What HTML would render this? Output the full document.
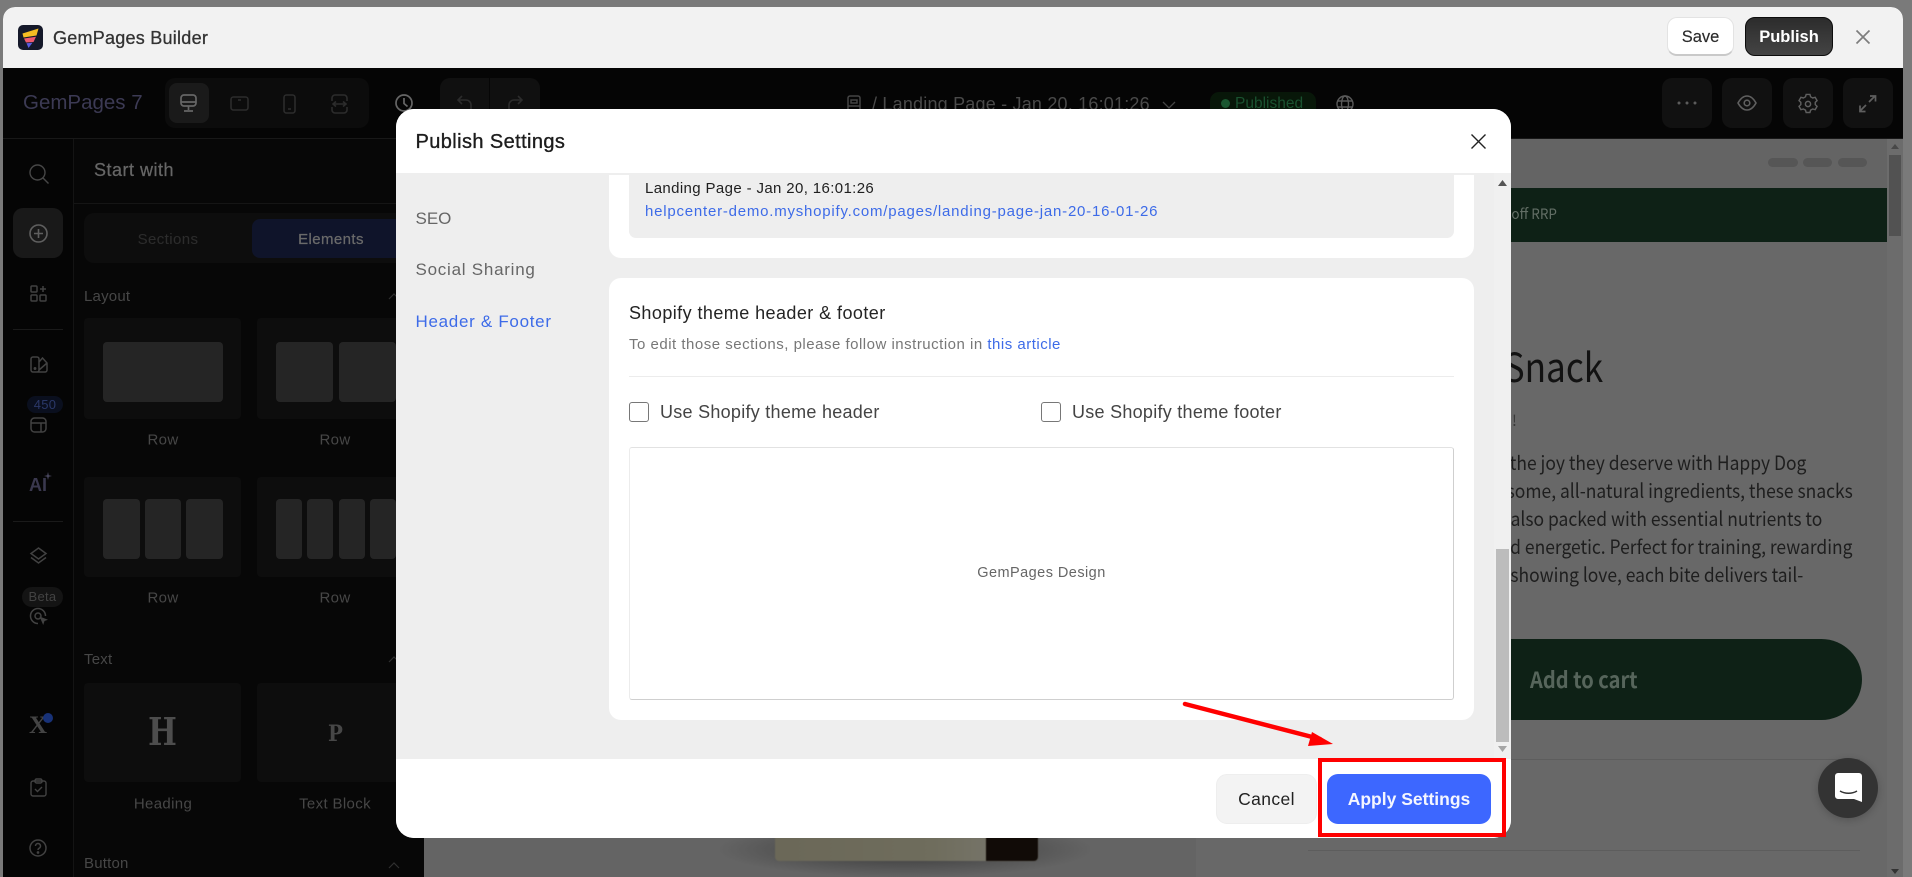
<!DOCTYPE html>
<html lang="en"><head><meta charset="utf-8"><title>GemPages Builder</title>
<style>
*{box-sizing:border-box}
html,body{margin:0;padding:0;width:1912px;height:877px;overflow:hidden;background:#7a7a7a;font-family:"Liberation Sans",sans-serif}
.a{position:absolute}
.t{position:absolute;white-space:nowrap;line-height:1}
svg{position:absolute;overflow:visible;fill:none}
.card{position:absolute;background:#0d0d0d;border-radius:4px}
.in{position:absolute;background:#252525;border-radius:4px}
.lb{position:absolute;white-space:nowrap;font-size:15px;line-height:1;color:#474747;transform:translate(-50%,-50%);letter-spacing:.35px}
.tb{position:absolute;top:78px;width:50px;height:50px;background:#111;border-radius:10px}
.src{font-family:"Noto Sans CJK SC",sans-serif}
.bt{font-size:19.500px;line-height:28px;color:#1e1e1e;transform:scaleX(.895);transform-origin:right center}
</style></head><body>
<!-- window -->
<div class="a" style="left:3px;top:7px;width:1900px;height:870px;background:#050505;border-radius:12px 12px 0 0;overflow:hidden">
</div>
<div class="a" style="left:3px;top:7px;width:1900px;height:61px;background:#f2f2f2;border-radius:12px 12px 0 0"></div>
<!-- title bar -->
<div class="a" style="left:18px;top:25px;width:25px;height:25px;border-radius:5px;background:#15192a"></div>
<svg style="left:18px;top:25px" width="25" height="25" viewBox="0 0 25 25">
<path d="M4.500 8.500 L20.500 3.500 L18.500 10.500 L5.500 12.500Z" fill="#f5bd22"/><path d="M6 13.500 L18 11.800 L15.500 17 L8 17.500Z" fill="#ee5a6f"/><path d="M8.500 18.300 L14.500 17.800 L10.500 23Z" fill="#5a5ce0"/>
</svg>
<div class="t" style="left:53px;top:28px;font-size:18px;line-height:20px;color:#333;letter-spacing:.25px;-webkit-text-stroke:.3px #333">GemPages Builder</div>
<div class="a" style="left:1667px;top:17px;width:67px;height:39px;background:#fff;border:1px solid #e3e3e3;border-bottom:2px solid #c9c9c9;border-radius:10px"></div>
<div class="t" style="left:1667px;top:27px;width:67px;text-align:center;font-size:16.500px;line-height:20px;color:#2a2a2a;-webkit-text-stroke:.15px #2a2a2a">Save</div>
<div class="a" style="left:1745px;top:17px;width:88px;height:39px;background:linear-gradient(#2c2c2c,#444);border:1.500px solid #0c0c0c;border-radius:10px"></div>
<div class="t" style="left:1745px;top:27px;width:88px;text-align:center;font-size:16.500px;font-weight:700;line-height:20px;color:#fff">Publish</div>
<svg style="left:1856px;top:30px" width="14" height="14"><path d="M.5.5 13.500 13.500M13.500.5.5 13.500" stroke="#7d7d7d" stroke-width="1.700"/></svg>

<!-- top bar -->
<div class="a" style="left:3px;top:138px;width:1900px;height:1px;background:#181818"></div>
<div class="t" style="left:23px;top:92px;font-size:20.500px;line-height:22px;color:#3c3a54">GemPages 7</div>
<div class="a" style="left:165px;top:78px;width:204px;height:50px;background:#0c0c0c;border-radius:10px"></div>
<div class="a" style="left:169px;top:83px;width:40px;height:40px;background:#1a1a1a;border-radius:8px"></div>
<svg style="left:180px;top:94px" width="18" height="20" stroke="#666" stroke-width="1.700"><rect x="1" y="1" width="15" height="11" rx="3"/><path d="M1 8h15M8.500 12v4M4 17h9"/></svg>
<svg style="left:230px;top:96px" width="20" height="16" stroke="#2c2c2c" stroke-width="1.600"><rect x="1" y="1" width="17" height="13" rx="2.500"/><path d="M8 4h3"/></svg>
<svg style="left:283px;top:94px" width="14" height="20" stroke="#2c2c2c" stroke-width="1.600"><rect x="1" y="1" width="11" height="18" rx="2.500"/><path d="M5 15h3"/></svg>
<svg style="left:331px;top:94px" width="18" height="20" stroke="#2c2c2c" stroke-width="1.600"><path d="M1 7V4a3 3 0 0 1 3-3h9a3 3 0 0 1 3 3v3M1 13v3a3 3 0 0 0 3 3h9a3 3 0 0 0 3-3v-3M2 10h13M5 7.500 2 10l3 2.500M12 7.500l3 2.500-3 2.500"/></svg>
<svg style="left:395px;top:94px" width="18" height="18" stroke="#666" stroke-width="1.700"><circle cx="9" cy="9" r="8"/><path d="M9 4v5.500l3.500 3"/></svg>
<div class="a" style="left:440px;top:78px;width:100px;height:50px;background:#101010;border-radius:10px"></div>
<div class="a" style="left:489px;top:78px;width:1px;height:50px;background:#060606"></div>
<svg style="left:457px;top:95px" width="16" height="16" stroke="#2c2c2c" stroke-width="1.600"><path d="M5 1 1 5l4 4M1 5h8a5 5 0 0 1 5 5v5"/></svg>
<svg style="left:507px;top:95px" width="16" height="16" stroke="#2c2c2c" stroke-width="1.600"><path d="M11 1l4 4-4 4M15 5H7a5 5 0 0 0-5 5v5"/></svg>

<svg style="left:847px;top:95px" width="14" height="18" stroke="#454545" stroke-width="1.500"><rect x="1" y="1" width="12" height="16" rx="2"/><path d="M1 11h12M4 5h6v3H4z"/></svg>
<div class="t" style="left:872px;top:94px;font-size:18px;line-height:21px;color:#4a4a4a;letter-spacing:.2px">/ Landing Page - Jan 20, 16:01:26</div>
<svg style="left:1162px;top:101px" width="14" height="8" stroke="#444" stroke-width="1.300"><path d="M1 1l6 6 6-6"/></svg>
<div class="a" style="left:1210px;top:92px;width:106px;height:25px;border-radius:9px;background:#081709"></div>
<div class="a" style="left:1221px;top:99px;width:9px;height:9px;border-radius:50%;background:#1a5730"></div>
<div class="t" style="left:1235px;top:95px;font-size:15.500px;line-height:18px;color:#1a5230">Published</div>
<svg style="left:1336px;top:95px" width="18" height="18" stroke="#5a5a5a" stroke-width="1.400"><circle cx="9" cy="9" r="8"/><ellipse cx="9" cy="9" rx="3.500" ry="8"/><path d="M1.500 6h15M1.500 12h15"/></svg>

<div class="tb" style="left:1662px"></div><div class="tb" style="left:1722px"></div><div class="tb" style="left:1783px"></div><div class="tb" style="left:1843px"></div>
<svg style="left:1677px;top:100px" width="20" height="6"><circle cx="2" cy="3" r="1.500" fill="#5c5c5c"/><circle cx="10" cy="3" r="1.500" fill="#5c5c5c"/><circle cx="18" cy="3" r="1.500" fill="#5c5c5c"/></svg>
<svg style="left:1737px;top:95px" width="20" height="16" stroke="#5f5f5f" stroke-width="1.600"><path d="M1 8c2.500-4.500 5.500-7 9-7s6.500 2.500 9 7c-2.500 4.500-5.500 7-9 7S3.500 12.500 1 8z"/><circle cx="10" cy="8" r="2.800"/></svg>
<svg style="left:1799px;top:94px" width="18" height="20" stroke="#5f5f5f" stroke-width="1.500"><path d="M7 1h4l.7 2.500 2.200 1.200L16.500 4l2 3.500-1.900 1.800v2.400l1.900 1.800-2 3.500-2.600-.7-2.200 1.200L11 20H7l-.7-2.500-2.200-1.200-2.600.7-2-3.500 1.900-1.800V9.300L-.5 7.500l2-3.500 2.600.7 2.200-1.200z" transform="translate(0.500 -.5) scale(.95)"/><circle cx="9" cy="10" r="2.600"/></svg>
<svg style="left:1859px;top:95px" width="18" height="17" stroke="#5f5f5f" stroke-width="1.700"><path d="M10 7 16 1M11 1h5.500v5.500M7 10l-6 6M1 10.500V16.500h5.500"/></svg>

<!-- left rail -->
<div class="a" style="left:73px;top:139px;width:1px;height:738px;background:#141414"></div>
<svg style="left:29px;top:164px" width="20" height="20" stroke="#474747" stroke-width="1.400"><circle cx="8.500" cy="8.500" r="7.500"/><path d="M14 14l5.500 5.500"/></svg>
<div class="a" style="left:13px;top:208px;width:50px;height:50px;background:#191919;border-radius:10px"></div>
<svg style="left:29px;top:224px" width="19" height="19" stroke="#5f5f5f" stroke-width="1.600"><circle cx="9.500" cy="9.500" r="8.500"/><path d="M9.500 5v9M5 9.500h9"/></svg>
<svg style="left:30px;top:285px" width="17" height="17" stroke="#424242" stroke-width="1.500"><rect x="1" y="1" width="6" height="6" rx="1"/><rect x="1" y="10" width="6" height="6" rx="1"/><rect x="10" y="10" width="6" height="6" rx="1"/><path d="M13 1v6M10 4h6"/></svg>
<div class="a" style="left:13px;top:329px;width:50px;height:1px;background:#1a1a1a"></div>
<svg style="left:30px;top:356px" width="18" height="17" stroke="#424242" stroke-width="1.500"><path d="M3 1h4a2 2 0 0 1 2 2v11a2 2 0 0 1-2 2H3a2 2 0 0 1-2-2V3a2 2 0 0 1 2-2zM9 6l3.500-4 4.500 5v7a2 2 0 0 1-2 2H7M9 14 16.500 7.500"/><circle cx="5" cy="12.500" r=".7" fill="#424242"/></svg>
<div class="a" style="left:27px;top:396px;width:36px;height:17px;border-radius:9px;background:#0a0f1e"></div>
<div class="t" style="left:27px;top:397px;width:36px;text-align:center;font-size:13px;line-height:15px;color:#2a3868;letter-spacing:.3px">450</div>
<svg style="left:30px;top:417px" width="17" height="16" stroke="#424242" stroke-width="1.500"><rect x="1" y="1" width="15" height="14" rx="3.500"/><path d="M1 6h15M11 6v9"/></svg>
<div class="t" style="left:29px;top:475px;font-size:18px;font-weight:700;line-height:20px;color:#3a384e">AI</div>
<svg style="left:44px;top:472px" width="8" height="8"><path d="M4 0l.8 3.200L8 4l-3.200.8L4 8l-.8-3.200L0 4l3.200-.8z" fill="#4a4860"/></svg>
<div class="a" style="left:13px;top:521px;width:50px;height:1px;background:#1a1a1a"></div>
<svg style="left:30px;top:547px" width="17" height="18" stroke="#424242" stroke-width="1.500"><path d="M8.500 1 16 6.500 8.500 12 1 6.500zM1 10.500 8.500 16 16 10.500"/></svg>
<div class="a" style="left:22px;top:587px;width:41px;height:20px;border-radius:10px;background:#141414"></div>
<div class="t" style="left:22px;top:589px;width:41px;text-align:center;font-size:13px;line-height:15px;color:#434343;letter-spacing:.3px">Beta</div>
<svg style="left:30px;top:608px" width="20" height="18" stroke="#424242" stroke-width="1.500"><path d="M8 15.500A7.500 7.500 0 1 1 15.500 8"/><circle cx="8" cy="8" r="3"/><path d="M9.500 8.500l8.500 3.200-3.500 1.300-1.300 4z" fill="#424242" stroke="none"/></svg>
<div class="t" style="left:29px;top:713px;font-size:25px;font-weight:700;line-height:26px;color:#444;font-family:'Liberation Serif',serif">X</div>
<div class="a" style="left:43px;top:713px;width:10px;height:10px;border-radius:50%;background:#183278"></div>
<svg style="left:30px;top:778px" width="17" height="20" stroke="#424242" stroke-width="1.400"><rect x="1" y="3" width="15" height="15" rx="2"/><rect x="5" y="1" width="7" height="4" rx="1.500"/><path d="M5 11l2.500 2.500L12 9"/></svg>
<svg style="left:29px;top:839px" width="18" height="18" stroke="#424242" stroke-width="1.500"><circle cx="9" cy="9" r="8"/><path d="M6.500 7a2.500 2.500 0 1 1 3.500 2.300c-.7.400-1 .8-1 1.700"/><circle cx="9" cy="13.500" r=".6" fill="#424242"/></svg>

<!-- panel -->
<div class="a" style="left:74px;top:139px;width:350px;height:738px;background:#070707"></div>
<div class="t" style="left:94px;top:160px;font-size:18px;line-height:20px;color:#666;letter-spacing:.5px;-webkit-text-stroke:.25px #666">Start with</div>
<div class="a" style="left:74px;top:203px;width:350px;height:1px;background:#151515"></div>
<div class="a" style="left:84px;top:213px;width:330px;height:50px;background:#0d0d0d;border-radius:10px"></div>
<div class="a" style="left:252px;top:219px;width:158px;height:39px;background:#0f142a;border-radius:8px"></div>
<div class="t" style="left:84px;top:231px;width:168px;text-align:center;font-size:15px;line-height:17px;color:#2c2c2c;letter-spacing:.4px;-webkit-text-stroke:.1px #2c2c2c">Sections</div>
<div class="t" style="left:252px;top:231px;width:158px;text-align:center;font-size:15px;line-height:17px;color:#6a6a6a;letter-spacing:.4px;-webkit-text-stroke:.25px #6a6a6a">Elements</div>
<div class="t" style="left:84px;top:288px;font-size:15px;line-height:17px;color:#474747;letter-spacing:.2px">Layout</div>
<svg style="left:388px;top:293px" width="12" height="7" stroke="#303030" stroke-width="1.200"><path d="M1 6l5-5 5 5"/></svg>

<div class="card" style="left:84px;top:318px;width:157px;height:101px"></div>
<div class="card" style="left:257px;top:318px;width:157px;height:101px"></div>
<div class="in" style="left:103px;top:342px;width:120px;height:60px"></div>
<div class="in" style="left:276px;top:342px;width:57px;height:60px"></div>
<div class="in" style="left:339px;top:342px;width:57px;height:60px"></div>
<div class="lb" style="left:163px;top:440px">Row</div>
<div class="lb" style="left:335px;top:440px">Row</div>
<div class="card" style="left:84px;top:477px;width:157px;height:100px"></div>
<div class="card" style="left:257px;top:477px;width:157px;height:100px"></div>
<div class="in" style="left:103px;top:499px;width:37px;height:60px"></div>
<div class="in" style="left:145px;top:499px;width:36px;height:60px"></div>
<div class="in" style="left:186px;top:499px;width:37px;height:60px"></div>
<div class="in" style="left:276px;top:499px;width:26px;height:60px"></div>
<div class="in" style="left:307px;top:499px;width:26px;height:60px"></div>
<div class="in" style="left:339px;top:499px;width:26px;height:60px"></div>
<div class="in" style="left:370px;top:499px;width:26px;height:60px"></div>
<div class="lb" style="left:163px;top:598px">Row</div>
<div class="lb" style="left:335px;top:598px">Row</div>
<div class="t" style="left:84px;top:651px;font-size:15px;line-height:17px;color:#474747;letter-spacing:.2px">Text</div>
<svg style="left:388px;top:656px" width="12" height="7" stroke="#303030" stroke-width="1.200"><path d="M1 6l5-5 5 5"/></svg>
<div class="card" style="left:84px;top:683px;width:157px;height:99px"></div>
<div class="card" style="left:257px;top:683px;width:157px;height:99px"></div>
<div class="t" style="left:84px;top:710px;width:157px;text-align:center;font-family:'DejaVu Serif',serif;font-weight:700;font-size:38px;line-height:44px;color:#4d4d4d;transform:scaleX(.8)">H</div>
<div class="t" style="left:257px;top:720px;width:157px;text-align:center;font-family:'DejaVu Serif',serif;font-weight:700;font-size:22px;line-height:28px;color:#474747;transform:scaleX(.9)">P</div>
<div class="lb" style="left:163px;top:804px">Heading</div>
<div class="lb" style="left:335px;top:804px">Text Block</div>
<div class="t" style="left:84px;top:855px;font-size:15px;line-height:17px;color:#474747;letter-spacing:.2px">Button</div>
<svg style="left:388px;top:862px" width="12" height="7" stroke="#303030" stroke-width="1.200"><path d="M1 6l5-5 5 5"/></svg>

<!-- canvas -->
<div class="a" style="left:424px;top:139px;width:1463px;height:738px;background:#646464"></div>
<div class="a" style="left:1196px;top:242px;width:691px;height:635px;background:#686868"></div>
<div class="a" style="left:720px;top:838px;width:370px;height:39px;background:radial-gradient(ellipse at 50% 30%,#4a4a4a 30%,#646464 72%)"></div>
<div class="a" style="left:775px;top:836px;width:263px;height:25px;background:linear-gradient(90deg,#6b6858,#6f6d5d 60%,#77756a 85%);border-radius:0 0 4px 4px;filter:blur(.6px)"></div>
<div class="a" style="left:986px;top:836px;width:52px;height:25px;background:#110b07;border-radius:0 0 4px 0;filter:blur(.6px)"></div>
<div class="a" style="left:1887px;top:139px;width:16px;height:738px;background:#6c6c6c"></div>
<div class="a" style="left:1889px;top:155px;width:12px;height:81px;background:#525252"></div>
<svg style="left:1891px;top:144px" width="8" height="5"><path d="M0 5 4 0l4 5z" fill="#484848"/></svg>
<svg style="left:1891px;top:869px" width="8" height="5"><path d="M0 0l4 5 4-5z" fill="#333"/></svg>
<div class="a" style="left:1768px;top:158px;width:30px;height:9px;border-radius:5px;background:#565656"></div>
<div class="a" style="left:1803px;top:158px;width:29px;height:9px;border-radius:5px;background:#565656"></div>
<div class="a" style="left:1838px;top:158px;width:29px;height:9px;border-radius:5px;background:#565656"></div>
<div class="a" style="left:424px;top:188px;width:1463px;height:54px;background:#0e2116"></div>
<div class="t src" style="right:355px;top:205px;font-size:14.500px;line-height:18px;color:#626e65;transform:scaleX(.93);transform-origin:right center">off RRP</div>
<div class="t src" style="right:309px;top:340px;font-size:40px;line-height:50px;color:#121212;transform:scaleX(.88);transform-origin:right center">Snack</div>
<div class="t src" style="left:1512px;top:412px;font-size:15px;line-height:18px;color:#3a3a3a">!</div>
<div class="t src bt" style="right:106px;top:448px">the joy they deserve with Happy Dog</div>
<div class="t src bt" style="right:59px;top:476px">some, all-natural ingredients, these snacks</div>
<div class="t src bt" style="right:90px;top:503.500px">also packed with essential nutrients to</div>
<div class="t src bt" style="right:59px;top:531.500px">d energetic. Perfect for training, rewarding</div>
<div class="t src bt" style="right:109px;top:559.500px">showing love, each bite delivers tail-</div>
<div class="a" style="left:1400px;top:639px;width:462px;height:81px;background:#0e2116;border-radius:41px"></div>
<div class="t src" style="left:1530px;top:664px;font-size:22.500px;font-weight:700;line-height:30px;color:#56655b;transform:scaleX(.89);transform-origin:left center">Add to cart</div>
<div class="a" style="left:1400px;top:759px;width:460px;height:1px;background:#5d5d5d"></div>
<div class="a" style="left:1308px;top:850px;width:552px;height:1px;background:#5d5d5d"></div>
<div class="a" style="left:1818px;top:758px;width:60px;height:60px;border-radius:50%;background:#333;box-shadow:0 2px 8px rgba(0,0,0,.2)"></div>
<svg style="left:1835px;top:773px" width="27" height="30"><path d="M3 0h21a3 3 0 0 1 3 3v26l-8-3H3a3 3 0 0 1-3-3V3a3 3 0 0 1 3-3z" fill="#fff"/><path d="M5 18c5 3 12 3 17 0" stroke="#333" stroke-width="1.500"/></svg>

<!-- modal -->
<div class="a" style="left:396px;top:109px;width:1115px;height:729px;background:#eee;border-radius:18px;overflow:hidden">
 <div class="a" style="left:0;top:0;width:1115px;height:64px;background:#fff"></div>
 <div class="a" style="left:0;top:650px;width:1115px;height:79px;background:#fff"></div>
 <div class="a" style="left:1098px;top:64px;width:17px;height:586px;background:#f0f0f0"></div>
 <div class="a" style="left:1100px;top:440px;width:13px;height:193px;background:#bcbcbc"></div>
 <svg style="left:1102px;top:71px" width="9" height="6"><path d="M0 6 4.500 0 9 6z" fill="#555"/></svg>
 <svg style="left:1102px;top:637px" width="9" height="6"><path d="M0 0l4.500 6L9 0z" fill="#a5a5a5"/></svg>
 <div class="a" style="left:213px;top:66px;width:865px;height:83px;background:#fff;border-radius:0 0 12px 12px"></div>
 <div class="a" style="left:233px;top:66px;width:825px;height:63px;background:#eee;border-radius:0 0 7px 7px"></div>
 <div class="a" style="left:213px;top:169px;width:865px;height:442px;background:#fff;border-radius:12px"></div>
 <div class="a" style="left:233px;top:267px;width:825px;height:1px;background:#ececec"></div>
 <div class="a" style="left:233px;top:338px;width:825px;height:253px;background:#fff;border:1px solid #cfcfcf;border-left-color:#ececec;border-top-color:#e2e2e2;border-radius:3px"></div>
</div>
<div class="t" style="left:415.500px;top:131px;font-size:20px;line-height:23px;color:#1d1d1d;-webkit-text-stroke:.35px #1d1d1d;letter-spacing:.4px">Publish Settings</div>
<svg style="left:1471px;top:134px" width="15" height="15"><path d="M.5.5l14 14M14.500.5l-14 14" stroke="#222" stroke-width="1.400"/></svg>
<div class="t" style="left:415.500px;top:209px;font-size:17px;line-height:20px;color:#666">SEO</div>
<div class="t" style="left:415.500px;top:260px;font-size:17px;line-height:20px;color:#666;letter-spacing:.75px">Social Sharing</div>
<div class="t" style="left:415.500px;top:312px;font-size:17px;line-height:20px;color:#3d6be8;letter-spacing:.7px">Header &amp; Footer</div>
<div class="t" style="left:645px;top:180px;font-size:15px;line-height:18px;color:#1f1f1f;letter-spacing:.37px">Landing Page - Jan 20, 16:01:26</div>
<div class="t" style="left:645px;top:203px;font-size:15px;line-height:18px;color:#3d6be8;letter-spacing:.78px">helpcenter-demo.myshopify.com/pages/landing-page-jan-20-16-01-26</div>
<div class="t" style="left:629px;top:303px;font-size:18px;line-height:20px;color:#242424;letter-spacing:.43px">Shopify theme header &amp; footer</div>
<div class="t" style="left:629px;top:336px;font-size:15px;line-height:18px;color:#777;letter-spacing:.5px">To edit those sections, please follow instruction in <span style="color:#3d6be8">this article</span></div>
<div class="a" style="left:629px;top:402px;width:20px;height:20px;border:1.500px solid #777;border-radius:3px;background:#fff"></div>
<div class="t" style="left:660px;top:402px;font-size:18px;line-height:20px;color:#444;letter-spacing:.27px">Use Shopify theme header</div>
<div class="a" style="left:1041px;top:402px;width:20px;height:20px;border:1.500px solid #777;border-radius:3px;background:#fff"></div>
<div class="t" style="left:1072px;top:402px;font-size:18px;line-height:20px;color:#444;letter-spacing:.27px">Use Shopify theme footer</div>
<div class="t" style="left:629px;top:565px;width:825px;text-align:center;font-size:14.500px;line-height:17px;color:#666;letter-spacing:.45px">GemPages Design</div>
<div class="a" style="left:1216px;top:774px;width:101px;height:50px;background:#f3f3f3;border-radius:11px;border:1px solid #eee"></div>
<div class="t" style="left:1216px;top:789px;width:101px;text-align:center;font-size:17.500px;line-height:20px;color:#222;letter-spacing:.4px">Cancel</div>
<div class="a" style="left:1327px;top:774px;width:164px;height:50px;background:#3d67ff;border-radius:11px"></div>
<div class="t" style="left:1327px;top:789px;width:164px;text-align:center;font-size:17.500px;font-weight:700;line-height:20px;color:#f4f6ff">Apply Settings</div>
<!-- annotations -->
<div class="a" style="left:1318px;top:758px;width:188px;height:79px;border:4px solid #f00"></div>
<svg style="left:0;top:0" width="1912" height="877"><path d="M1185 704 1320 739" stroke="#f00" stroke-width="4.500" stroke-linecap="round"/><path d="M1312 732 1333 744 1308 746z" fill="#f00"/></svg>
</body></html>
